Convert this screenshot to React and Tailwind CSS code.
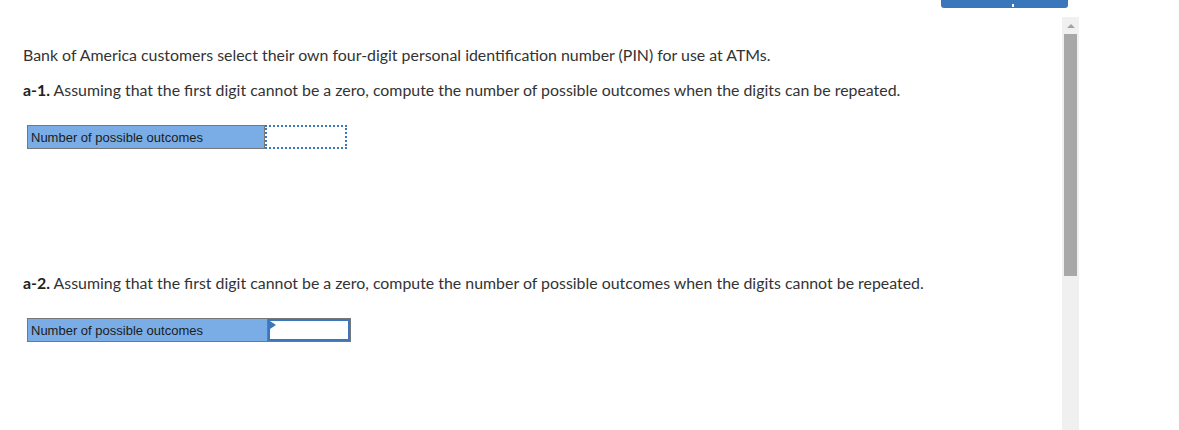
import { useState } from 'react'

const TEXT_FONT = { fontFamily: 'Lato, "Open Sans", sans-serif' }

const AnswerRow = ({ focused, labelWidth }) => {
    const [value, setValue] = useState('')

    return (
        <div className="flex h-[24px] w-fit border border-[#777]">
            {/* Label */}
            <div className={`${labelWidth} bg-[#7aade5] border-r border-[#777] pl-[3px] pt-px flex items-center text-[13px] text-[#1c1c1c] font-['Liberation_Sans',Arial,sans-serif]`}>
                Number of possible outcomes
            </div>

            {/* Input */}
            {focused ? (
                <div className="relative w-[82px] border-2 border-[#3a77bb] bg-white">
                    <span className="absolute left-0 top-0 w-0 h-0 border-t-[4px] border-b-[4px] border-l-[6px] border-t-transparent border-b-transparent border-l-[#3a77bb]" />
                    <input
                        value={value}
                        onChange={e => setValue(e.target.value)}
                        className="w-full h-full outline-none bg-transparent text-[12px] px-1"
                    />
                </div>
            ) : (
                <div className="w-[82px] border-2 border-dotted border-[#3a77bb] bg-white -my-px -mr-px">
                    <input
                        value={value}
                        onChange={e => setValue(e.target.value)}
                        className="w-full h-full outline-none bg-transparent text-[12px] px-1"
                    />
                </div>
            )}
        </div>
    )
}

const App = () => {
    return (
        <div className="w-[1179px] h-[430px] bg-white overflow-hidden flex flex-col">
            {/* Top bar with cut-off button */}
            <div className="h-[17px] flex">
                <div className="ml-[941px] w-[127px] h-[8px] bg-[#3a76bb] rounded-b-[3px] flex justify-center">
                    <span className="mt-[4px] ml-[16px] w-[2px] h-[3px] bg-white" />
                </div>
            </div>

            <div className="flex flex-1 min-h-0">
                {/* Question content */}
                <div className="w-[1062px] pl-[23px] pt-[29px] text-[15.9px] text-[#333]" style={TEXT_FONT}>
                    <p className="leading-[18px]">
                        Bank of America customers select their own four-digit personal identification number (PIN) for use at ATMs.
                    </p>
                    <p className="leading-[18px] mt-[17px]">
                        <b className="font-bold text-[#222]">a-1.</b> Assuming that the first digit cannot be a zero, compute the number of possible outcomes when the digits can be repeated.
                    </p>
                    <div className="mt-[26px] ml-[4px]">
                        <AnswerRow focused={false} labelWidth="w-[237px]" />
                    </div>
                    <p className="leading-[18px] mt-[125px]">
                        <b className="font-bold text-[#222]">a-2.</b> Assuming that the first digit cannot be a zero, compute the number of possible outcomes when the digits cannot be repeated.
                    </p>
                    <div className="mt-[26px] ml-[4px]">
                        <AnswerRow focused labelWidth="w-[240px]" />
                    </div>
                </div>

                {/* Scrollbar */}
                <div className="w-[17px] bg-[#f0f0f0] flex flex-col items-center">
                    <div className="h-[17px] flex items-center justify-center">
                        <span className="w-0 h-0 border-l-[4px] border-r-[4px] border-b-[4px] border-l-transparent border-r-transparent border-b-[#a3a3a3]" />
                    </div>
                    <div className="w-[13px] h-[242px] bg-[#a8a8a8]" />
                </div>
            </div>
        </div>
    )
}

export default App
